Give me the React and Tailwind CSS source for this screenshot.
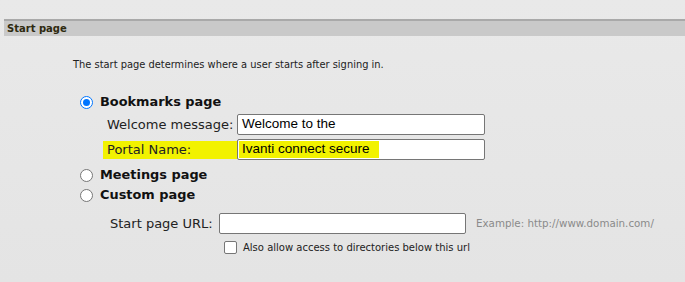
import React from "react";

const verdana = { fontFamily: '"DejaVu Sans", Verdana, sans-serif' };

// Radio option row
const RadioRow = ({ label, checked }) => {
  return (
    <label className="flex items-center h-[20px] gap-[7px]">
      <span
        className={
          checked
            ? "w-[13px] h-[13px] rounded-full border-[1.5px] border-[#0075ff] bg-white flex items-center justify-center"
            : "w-[13px] h-[13px] rounded-full border border-[#767676] bg-white"
        }
      >
        {checked && <span className="w-[7px] h-[7px] rounded-full bg-[#0075ff]" />}
      </span>
      <span className="text-[12.9px] font-bold text-[#111]">{label}</span>
    </label>
  );
};

const TextBox = ({ value, children }) => {
  return (
    <div className="relative w-[248px] h-[21px] bg-white border border-[#767676] rounded-[2px] flex items-center px-[4px]">
      {children}
      <span
        className="relative text-[13.5px] text-black"
        style={{ fontFamily: '"Liberation Sans", Arial, sans-serif' }}
      >
        {value}
      </span>
    </div>
  );
};

export default function App() {
  return (
    <div
      className="w-[685px] h-[282px] overflow-hidden bg-[linear-gradient(180deg,#e9e9e9,#e4e4e4)] text-[#222]"
      style={verdana}
    >
      {/* Section header */}
      <div className="pt-[19px] pl-[4px]">
        <div className="h-[17px] bg-[#c9c9c9] border-t-2 border-[#a9a9a9] flex items-center pl-[3px]">
          <span className="text-[10px] font-bold text-[#2e2a10]">Start page</span>
        </div>
      </div>

      {/* Description */}
      <p className="mt-[22px] pl-[73px] text-[9.9px] text-[#222] leading-[14px]">
        The start page determines where a user starts after signing in.
      </p>

      <div className="pl-[80px] mt-[20px]">
        <RadioRow label="Bookmarks page" checked />

        <div className="pl-[27px] mt-[2px] flex flex-col gap-[4px]">
          <div className="flex items-center h-[21px]">
            <span className="w-[130px] text-[13px] text-[#222]">Welcome message:</span>
            <TextBox value="Welcome to the" />
          </div>
          <div className="flex items-center h-[21px] relative">
            <span className="absolute left-[-4px] top-[2px] w-[136px] h-[18px] bg-[#f2f200]" />
            <span className="relative w-[130px] text-[13px] text-[#222]">Portal Name:</span>
            <TextBox value="Ivanti connect secure">
              <span className="absolute left-[1px] top-[1px] w-[140px] h-[17px] bg-[#f2f200]" />
            </TextBox>
          </div>
        </div>

        <div className="mt-[5px]">
          <RadioRow label="Meetings page" />
          <RadioRow label="Custom page" />
        </div>

        <div className="pl-[30px] mt-[8px] flex items-center h-[21px]">
          <span className="w-[109px] text-[13px] text-[#222]">Start page URL:</span>
          <div className="w-[247px] h-[21px] bg-white border border-[#767676] rounded-[2px]" />
          <span className="ml-[10px] text-[10.3px] text-[#8a8a8a]">
            Example: http://www.domain.com/
          </span>
        </div>

        <div className="pl-[144px] mt-[6px] flex items-center gap-[6px]">
          <span className="w-[13px] h-[13px] bg-white border border-[#767676] rounded-[2px]" />
          <span className="text-[10px] text-[#222]">
            Also allow access to directories below this url
          </span>
        </div>
      </div>
    </div>
  );
}
